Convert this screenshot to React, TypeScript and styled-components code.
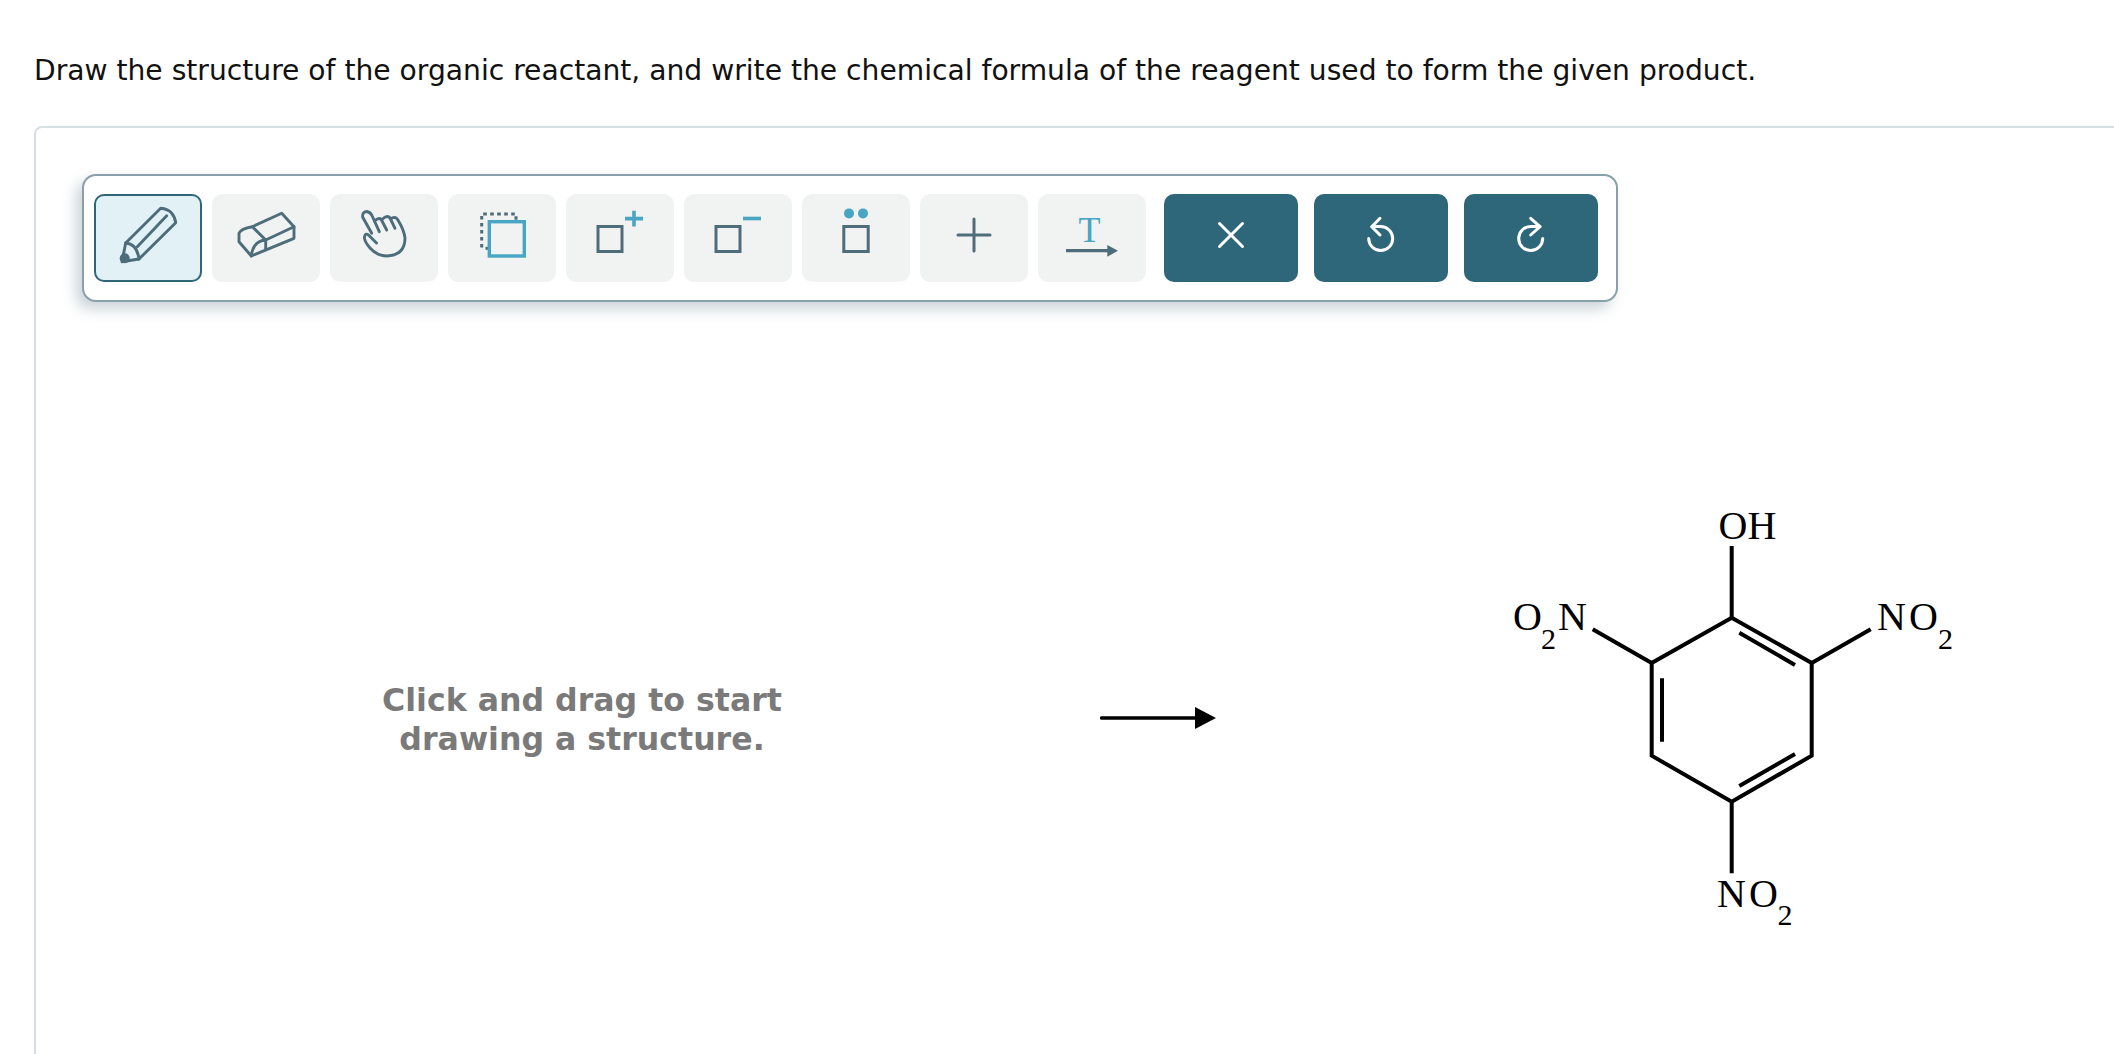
import React from 'react';
import styled, { createGlobalStyle } from 'styled-components';

const slate = '#4d6d7a';
const sky = '#48a5c4';

const GlobalStyle = createGlobalStyle`
  html, body {
    margin: 0;
    padding: 0;
    background: #fff;
  }
`;

const PencilIcon = () => (
  <IconSvg viewBox="0 0 108 88" fill="none" stroke={slate} strokeWidth="2.9" strokeLinejoin="round" strokeLinecap="round">
    <path d="M31.7 49 L66.7 14.3 Q74 15 77.5 19 Q81 23 81.7 28.7 L45 65 L28 67.7 Z" />
    <path d="M72.7 21.7 L43.3 52.7" />
    <path d="M31.7 49 Q43 50 45 65" />
    <circle cx="30.7" cy="64.3" r="3.6" fill={slate} />
  </IconSvg>
);

const EraserIcon = () => (
  <IconSvg viewBox="0 0 108 88" fill="none" stroke={slate} strokeWidth="2.9" strokeLinejoin="round" strokeLinecap="round">
    <path d="M40.3 32.7 L69.7 19.3 L82 32.7 L82 44.3 L39.3 62 L27 47.7 L27 39.3 Q29 34.5 40.3 32.7 Z" />
    <path d="M40.3 32.7 L53.7 46 L82 32.7" />
    <path d="M53.7 46 L53.7 55.3" />
    <path d="M53.7 46 Q41 47 39.3 62" />
  </IconSvg>
);

const HandIcon = () => (
  <IconSvg viewBox="0 0 108 88" fill="none" stroke={slate} strokeWidth="2.9" strokeLinejoin="round" strokeLinecap="round">
    <path d="M46.5 49 L38.5 41 Q35 38.5 34.5 43 Q34 47 40 54 Q47 62 57 62 Q75 61 75 44 Q74 36 68.5 27 Q66 22 62 24" />
    <path d="M41.7 39.3 L32.6 23 Q32 18 36.7 17.5 Q40 18 41.7 21 L49.3 37.7" />
    <path d="M44.5 27 Q50 22 52 27 L56.7 36" />
    <path d="M52.5 25 Q58 20 60.5 25 L65 34.3" />
  </IconSvg>
);

const SelectIcon = () => (
  <IconSvg viewBox="0 0 108 88" fill="none">
    <path d="M33.7 53.5 V20 H68 V27" stroke={slate} strokeWidth="3" strokeDasharray="3.6 3.4" />
    <path d="M37.5 54.3 H40" stroke={slate} strokeWidth="3" />
    <rect x="41.3" y="27.7" width="35" height="34.3" stroke={sky} strokeWidth="3.4" />
  </IconSvg>
);

const AddChargeIcon = () => (
  <IconSvg viewBox="0 0 108 88" fill="none">
    <rect x="32" y="32.5" width="24" height="25" stroke={slate} strokeWidth="3" />
    <path d="M59 24.6 H77 M68 16.7 V32.6" stroke={sky} strokeWidth="3.6" />
  </IconSvg>
);

const RemoveChargeIcon = () => (
  <IconSvg viewBox="0 0 108 88" fill="none">
    <rect x="32" y="32.5" width="24" height="25" stroke={slate} strokeWidth="3" />
    <path d="M59 24.5 H77" stroke={sky} strokeWidth="3.6" />
  </IconSvg>
);

const LonePairIcon = () => (
  <IconSvg viewBox="0 0 108 88" fill="none">
    <rect x="41.8" y="32.5" width="24.4" height="25" stroke={slate} strokeWidth="3" />
    <circle cx="47" cy="19.4" r="5" fill={sky} />
    <circle cx="61" cy="19.4" r="5" fill={sky} />
  </IconSvg>
);

const PlusIcon = () => (
  <IconSvg viewBox="0 0 108 88" fill="none">
    <path d="M38 41 H70 M54 25 V57" stroke={slate} strokeWidth="3" strokeLinecap="round" />
  </IconSvg>
);

const TextArrowIcon = () => (
  <IconSvg viewBox="0 0 108 88" fill="none">
    <IconLetter x="51.5" y="48" textAnchor="middle">T</IconLetter>
    <path d="M28 56.7 H70" stroke={slate} strokeWidth="3.2" />
    <path d="M69.3 51 L80 56.7 L69.3 62.7 Z" fill={slate} />
  </IconSvg>
);

const ClearIcon = () => (
  <IconSvg viewBox="0 0 134 88" fill="none">
    <path d="M55.5 29.5 L78.5 52.5 M78.5 29.5 L55.5 52.5" stroke="#fff" strokeWidth="3" strokeLinecap="round" />
  </IconSvg>
);

const UndoIcon = () => (
  <IconSvg viewBox="0 0 134 88" fill="none" stroke="#fff" strokeWidth="3" strokeLinecap="round" strokeLinejoin="round">
    <path d="M58 32.5 H66.7 A12 12 0 1 1 54.7 44.5" />
    <path d="M66 24.3 L57.7 32.7 L66 41" />
  </IconSvg>
);

const RedoIcon = () => (
  <IconSvg viewBox="0 0 134 88" fill="none" stroke="#fff" strokeWidth="3" strokeLinecap="round" strokeLinejoin="round">
    <path d="M76 32.5 H66.7 A12 12 0 1 0 78.7 44.5" />
    <path d="M66.7 24.3 L76 32.7 L66.7 41" />
  </IconSvg>
);

const toolIcons = [
  PencilIcon,
  EraserIcon,
  HandIcon,
  SelectIcon,
  AddChargeIcon,
  RemoveChargeIcon,
  LonePairIcon,
  PlusIcon,
  TextArrowIcon,
];

const actionIcons = [ClearIcon, UndoIcon, RedoIcon];

const ReactionArrow = () => (
  <ArrowSvg viewBox="0 0 117 24">
    <path d="M1.5 12 H98" stroke="#000" strokeWidth="3.4" strokeLinecap="round" />
    <path d="M95 1 L116 12 L95 23 Z" fill="#000" />
  </ArrowSvg>
);

const Molecule = () => (
  <MoleculeSvg viewBox="0 0 500 450">
    <g stroke="#000" strokeWidth="4" fill="none" strokeLinejoin="miter">
      <path d="M251.7 127.7 L331.7 173 V265.7 L251.7 311.7 L171.7 265.7 V173 Z" />
      <path d="M251.7 127.7 V56 M171.7 173 L112.7 139.3 M331.7 173 L390.7 139.3 M251.7 311.7 V383.3" />
      <path d="M259.3 142.7 L315 175 M182 188.3 V251.7 M259.3 296 L315 264" />
    </g>
    <Atom x="238.5" y="49.3">OH</Atom>
    <Atom x="33" y="140">O</Atom>
    <Subscript x="61" y="159">2</Subscript>
    <Atom x="78" y="140">N</Atom>
    <Atom x="397" y="140">N</Atom>
    <Atom x="429" y="140">O</Atom>
    <Subscript x="458" y="159">2</Subscript>
    <Atom x="237" y="416.7">N</Atom>
    <Atom x="269" y="416.7">O</Atom>
    <Subscript x="297.5" y="435">2</Subscript>
  </MoleculeSvg>
);

export default function App() {
  return (
    <Page>
      <GlobalStyle />
      <Prompt>
        Draw the structure of the organic reactant, and write the chemical formula of the reagent used to form the given product.
      </Prompt>
      <Card>
        <Toolbar>
          <ToolGroup>
            {toolIcons.map((Icon, i) => (
              <ToolButton key={i} $active={i === 0}>
                <Icon />
              </ToolButton>
            ))}
          </ToolGroup>
          <ActionGroup>
            {actionIcons.map((Icon, i) => (
              <ActionButton key={i}>
                <Icon />
              </ActionButton>
            ))}
          </ActionGroup>
        </Toolbar>
        <Workspace>
          <Hint>
            Click and drag to start
            <br />
            drawing a structure.
          </Hint>
          <ReactionArrow />
          <Molecule />
        </Workspace>
      </Card>
    </Page>
  );
}

const Page = styled.div`
  height: 100vh;
  overflow: hidden;
  font-family: 'DejaVu Sans', Verdana, sans-serif;
`;

const Prompt = styled.p`
  margin: 0;
  padding: 52px 0 0 34px;
  font-size: 28.16px;
  line-height: 38px;
  color: #111;
  white-space: nowrap;
`;

const Card = styled.div`
  box-sizing: border-box;
  width: 2200px;
  height: 1000px;
  margin: 36px 0 0 34px;
  padding: 46px 0 0 46px;
  border: 2px solid #d6e0e3;
  border-radius: 8px;
`;

const Toolbar = styled.div`
  box-sizing: border-box;
  display: flex;
  gap: 18px;
  width: 1536px;
  height: 128px;
  padding: 18px 17px 18px 10px;
  background: #fff;
  border: 2px solid #88a0aa;
  border-radius: 14px;
  box-shadow: -6px 7px 14px rgba(70, 100, 115, 0.28);
`;

const ToolGroup = styled.div`
  display: flex;
  gap: 10px;
`;

const ActionGroup = styled.div`
  display: flex;
  gap: 16px;
`;

const ToolButton = styled.div<{ $active?: boolean }>`
  box-sizing: border-box;
  width: 108px;
  height: 88px;
  background: ${props => (props.$active ? '#e1f1f6' : '#f1f3f3')};
  border: ${props => (props.$active ? '2px solid #2e6779' : 'none')};
  border-radius: 10px;
  display: flex;
  align-items: center;
  justify-content: center;

  svg {
    flex: none;
  }
`;

const ActionButton = styled.div`
  width: 134px;
  height: 88px;
  background: #2e6779;
  border-radius: 10px;
`;

const IconSvg = styled.svg`
  display: block;
  height: 88px;
`;

const IconLetter = styled.text`
  font-family: 'Liberation Serif', 'Times New Roman', serif;
  font-size: 36px;
  fill: ${sky};
`;

const Workspace = styled.div`
  display: flex;
  align-items: flex-start;
`;

const Hint = styled.div`
  flex: none;
  width: 500px;
  margin: 379px 0 0 250px;
  font-size: 31.6px;
  font-weight: 700;
  line-height: 39px;
  text-align: center;
  color: #7a7a7a;
`;

const ArrowSvg = styled.svg`
  flex: none;
  display: block;
  width: 117px;
  height: 24px;
  margin: 404px 0 0 268px;
`;

const MoleculeSvg = styled.svg`
  flex: none;
  display: block;
  width: 500px;
  height: 450px;
  margin: 188px 0 0 263px;
`;

const Atom = styled.text`
  font-family: 'Liberation Serif', 'Times New Roman', serif;
  font-size: 40px;
  fill: #000;
`;

const Subscript = styled(Atom)`
  font-size: 30px;
`;
